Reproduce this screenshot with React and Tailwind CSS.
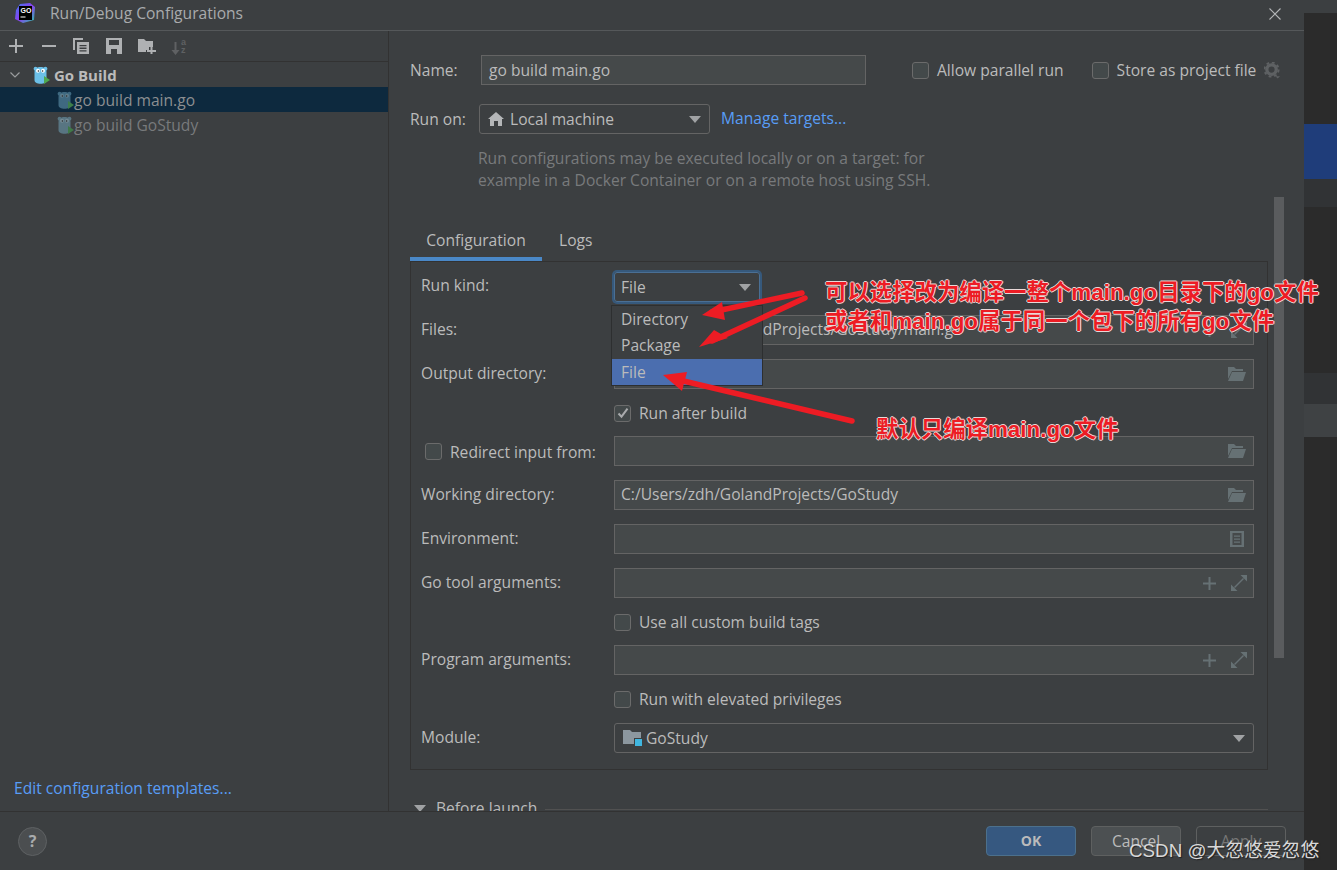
import React from 'react';

const Gopher = ({ body = '#6cc0e8', eye = '#ffffff', play = '#4fa84f', className = '' }) => (
  <svg viewBox="0 0 17 18" className={className}>
    <circle cx="2.600" cy="2.800" r="2" fill={body} />
    <circle cx="12.400" cy="2.800" r="2" fill={body} />
    <path d="M1.500 6c0-3.400 2.800-5 6-5s6 1.600 6 5v8c0 2.600-2.400 3.800-6 3.800s-6-1.200-6-3.800z" fill={body} />
    <circle cx="5" cy="4.800" r="2" fill={eye} />
    <circle cx="10" cy="4.800" r="2" fill={eye} />
    <circle cx="5.400" cy="5" r="0.800" fill="#2b2b2b" />
    <circle cx="9.600" cy="5" r="0.800" fill="#2b2b2b" />
    <path d="M11 10l6 4-6 4z" fill={play} />
  </svg>
);

const FolderOpen = () => (
  <svg viewBox="0 0 20 16" className="w-5 h-4">
    <path d="M1 1h6l2 2h7v2H5L1 13z" fill="#667174" />
    <path d="M5 6h14l-3 9H1z" fill="#667174" />
  </svg>
);

const PlusExpand = () => (
  <div className="flex items-center gap-[15px]">
    <svg viewBox="0 0 13 13" className="w-[13px] h-[13px]">
      <path d="M5.500 0h2v5.500H13v2H7.500V13h-2V7.500H0v-2h5.500z" fill="#667174" />
    </svg>
    <svg viewBox="0 0 16 16" className="w-4 h-4">
      <path d="M9.500 0H16v6.500zM0 9.500V16h6.500z" fill="#667174" />
      <path d="M3.500 12.500l9-9" stroke="#667174" strokeWidth="1.400" />
    </svg>
  </div>
);

const Caret = () => (
  <svg viewBox="0 0 12 7" className="w-3 h-[7px]">
    <path d="M0 0h12L6 7z" fill="#a0a2a4" />
  </svg>
);

const Checkbox = ({ checked }) => (
  <span className="w-[17px] h-[17px] shrink-0 rounded-[3px] border border-[#6b6b6b] bg-[#43494a] flex items-center justify-center">
    {checked && (
      <svg viewBox="0 0 12 12" className="w-3 h-3">
        <path d="M1.500 6.500l3 3.200 6-8" fill="none" stroke="#a9abad" strokeWidth="2" />
      </svg>
    )}
  </span>
);

const Input = ({ children, icon }) => (
  <div className="w-[640px] h-[30px] border border-[#646464] bg-[#45494a] pl-[6px] pr-[6px] flex items-center justify-between">
    <span className="pb-[2px]">{children}</span>
    {icon}
  </div>
);

const Row = ({ label, children, className = '', labelClass = 'pb-[2px]' }) => (
  <div className={`h-[30px] flex items-center ${className}`}>
    <div className={`w-[193px] shrink-0 ${labelClass}`}>{label}</div>
    {children}
  </div>
);

const CheckRow = ({ checked, children }) => (
  <div className="h-5 pl-[193px] flex items-center gap-2">
    <Checkbox checked={checked} />
    <span>{children}</span>
  </div>
);

const App = () => {
  return (
    <div className="w-[1337px] h-[870px] relative flex overflow-hidden bg-[#2b2b2b] text-[#bbbbbb] text-[15.6px] leading-6 font-['Open_Sans','Noto_Sans_CJK_SC',sans-serif]">
      <div className="w-[1304px] h-full flex flex-col bg-[#3c3f41]">
        {/* Title bar */}
        <div className="h-[31px] shrink-0 border-b border-[#55585a] flex items-center pl-[15px] pr-[23px]">
          <svg viewBox="0 0 20 20" className="w-5 h-5 mr-[15px] mb-[4px]">
            <defs>
              <linearGradient id="goland" x1="0" y1="0" x2="1" y2="1">
                <stop offset="0" stopColor="#3b7cf0" />
                <stop offset="0.5" stopColor="#8a3ff0" />
                <stop offset="1" stopColor="#25c9a0" />
              </linearGradient>
            </defs>
            <path d="M5 1l10-1 5 4-1 13-11 3-8-4 1-9z" fill="url(#goland)" />
            <rect x="4" y="3" width="13" height="14" fill="#000000" />
            <text x="5.500" y="10" fontSize="7" fontWeight="700" fill="#ffffff" fontFamily="Liberation Sans">GO</text>
            <rect x="5.500" y="13.500" width="5" height="1" fill="#ffffff" />
          </svg>
          <span className="text-[#a9abad] pb-[4px]">Run/Debug Configurations</span>
          <svg viewBox="0 0 12 12" className="w-3 h-3 ml-auto mb-[2px]">
            <path d="M0.500 0.500l11 11M11.500 0.500l-11 11" stroke="#b4b6b8" strokeWidth="1.100" />
          </svg>
        </div>

        <div className="flex-1 flex min-h-0">
          {/* Sidebar */}
          <aside className="w-[389px] shrink-0 border-r border-[#323232] flex flex-col">
            <div className="h-[31px] shrink-0 border-b border-[#323232] flex items-center pl-[9px] gap-[17px]">
              <svg viewBox="0 0 14 14" className="w-[14px] h-[14px]">
                <path d="M6 0h2v6h6v2H8v6H6V8H0V6h6z" fill="#afb1b3" />
              </svg>
              <svg viewBox="0 0 14 14" className="w-[14px] h-[14px] ml-[2px]">
                <path d="M0 6h14v2H0z" fill="#afb1b3" />
              </svg>
              <svg viewBox="0 0 16 16" className="w-4 h-4">
                <path d="M0 0h10v2H2v10H0z" fill="#afb1b3" />
                <path d="M4 4h12v12H4z" fill="#afb1b3" />
                <path d="M6.500 7h7v1.300h-7zM6.500 9.600h7v1.300h-7zM6.500 12.200h7v1.300h-7z" fill="#3c3f41" />
              </svg>
              <svg viewBox="0 0 16 16" className="w-4 h-4">
                <path d="M0 0h16v16H0z" fill="#afb1b3" />
                <path d="M3 2h10v5H3z" fill="#3c3f41" />
                <path d="M5 11h6v5H5z" fill="#3c3f41" />
              </svg>
              <svg viewBox="0 0 18 16" className="w-[18px] h-4 -ml-px">
                <path d="M0 1h6l2 2h7v6h-4v3H8v2H0z" fill="#afb1b3" />
                <path d="M12.500 9h2v3H18v2h-3.500v2h-2v-2H9v-2h3.500z" fill="#afb1b3" />
              </svg>
              <svg viewBox="0 0 18 18" className="w-[18px] h-[18px] -ml-[2px]">
                <path d="M3.500 5h2v8h3l-4 5-4-5h3z" fill="#5f6163" />
                <text x="10" y="8" fontSize="9" fontWeight="700" fill="#5f6163" fontFamily="Liberation Sans">a</text>
                <text x="10" y="16" fontSize="9" fontWeight="700" fill="#5f6163" fontFamily="Liberation Sans">z</text>
              </svg>
            </div>

            <div className="h-[25px] flex items-center pl-[10px]">
              <svg viewBox="0 0 10 6" className="w-[10px] h-[6px] mr-[13px]">
                <path d="M0.500 0.500L5 5l4.500-4.500" fill="none" stroke="#9a9c9e" strokeWidth="1.200" />
              </svg>
              <Gopher className="w-[17px] h-[18px] mr-[4px]" />
              <span className="font-bold text-[15px] mt-[1px]">Go Build</span>
            </div>
            <div className="h-[25px] flex items-center pl-[57px] bg-[#0d293e] text-[#8c8f91]">
              <Gopher body="#3f6980" eye="#5f7d8c" play="#3d7f4a" className="w-[17px] h-[18px]" />
              <span className="mt-[1px]">go build main.go</span>
            </div>
            <div className="h-[25px] flex items-center pl-[57px] text-[#787a7c]">
              <Gopher body="#587582" eye="#768c96" play="#3f7a48" className="w-[17px] h-[18px]" />
              <span className="mt-[1px]">go build GoStudy</span>
            </div>

            <div className="mt-auto pl-[14px] pb-[11px] text-[#589df6]">Edit configuration templates...</div>
          </aside>

          {/* Config form */}
          <main className="flex-1 min-w-0 relative overflow-hidden pl-[21px] pt-[24px]">
            <div className="h-[30px] flex items-center">
              <span className="w-[71px]">Name:</span>
              <div className="w-[385px] h-[30px] border border-[#646464] bg-[#45494a] px-[7px] flex items-center">go build main.go</div>
              <div className="ml-[46px] flex items-center gap-2">
                <Checkbox />
                <span>Allow parallel run</span>
              </div>
              <div className="ml-[28px] flex items-center gap-2">
                <Checkbox />
                <span>Store as project file</span>
              </div>
              <svg viewBox="0 0 18 18" className="w-[17px] h-[17px] ml-[8px]">
                <circle cx="8" cy="8" r="5" fill="none" stroke="#5e6163" strokeWidth="3.500" />
                <circle cx="8" cy="8" r="7.500" fill="none" stroke="#5e6163" strokeWidth="2" strokeDasharray="3 2.900" />
                <path d="M12 15h5l-2.500 2.500z" fill="#5e6163" />
              </svg>
            </div>

            <div className="mt-[19px] h-[30px] flex items-center">
              <span className="w-[69px]">Run on:</span>
              <div className="w-[231px] h-[30px] rounded-[3px] border border-[#646464] pl-2 pr-[8px] flex items-center">
                <svg viewBox="0 0 16 14" className="w-4 h-[14px] mr-[6px]">
                  <path d="M8 0l8 7h-2v7h-4V9H6v5H2V7H0z" fill="#b4b6b8" />
                </svg>
                <span>Local machine</span>
                <span className="ml-auto"><Caret /></span>
              </div>
              <span className="ml-[11px] text-[#589df6] pb-[3px]">Manage targets...</span>
            </div>

            <p className="mt-[13px] ml-[68px] leading-[22px] text-[#787a7c]">
              Run configurations may be executed locally or on a target: for
              <br />
              example in a Docker Container or on a remote host using SSH.
            </p>

            {/* Tabs */}
            <div className="mt-[36px] h-[34px] flex">
              <div className="w-[132px] border-b-4 border-[#4a88c7] flex items-center justify-center pb-[4px]">Configuration</div>
              <div className="ml-[17px] flex items-center pb-[8px]">Logs</div>
            </div>

            <div className="w-[858px] h-[509px] border border-[#323232] pl-[10px] pt-[10px] flex flex-col gap-[14px]">
              <Row label="Run kind:" labelClass="pb-[4px]">
                <div className="relative">
                  <div className="w-[146px] h-[30px] rounded-[3px] border border-[#4a6f94] ring-2 ring-[#36597c] pl-[6px] pr-[8px] flex items-center justify-between">
                    <span>File</span>
                    <Caret />
                  </div>
                  <div className="absolute left-[-3px] top-[33px] w-[152px] h-[81px] z-10 bg-[#3c3f41] border border-[#2d2f30]">
                    <div className="h-[26px] pl-[9px] flex items-center">Directory</div>
                    <div className="h-[27px] pl-[9px] pb-[1px] flex items-center">Package</div>
                    <div className="h-[26px] pl-[9px] flex items-center bg-[#4b6eaf]">File</div>
                  </div>
                </div>
              </Row>
              <Row label="Files:" className="-mt-px">
                <Input icon={<PlusExpand />}>C:/Users/zdh/GolandProjects/GoStudy/main.go</Input>
              </Row>
              <Row label="Output directory:">
                <Input icon={<FolderOpen />} />
              </Row>
              <CheckRow checked>Run after build</CheckRow>
              <div className="h-[30px] -mt-px flex items-center">
                <div className="w-[193px] shrink-0 pl-[4px] flex items-center gap-2">
                  <Checkbox />
                  <span className="mt-[2px]">Redirect input from:</span>
                </div>
                <Input icon={<FolderOpen />} />
              </div>
              <Row label="Working directory:">
                <Input icon={<FolderOpen />}>C:/Users/zdh/GolandProjects/GoStudy</Input>
              </Row>
              <Row label="Environment:">
                <Input
                  icon={
                    <svg viewBox="0 0 14 16" className="w-[14px] h-4 mr-[3px]">
                      <path d="M0 0h14v16H0z" fill="#667174" />
                      <path d="M2.500 2h9v12h-9z" fill="#45494a" />
                      <path d="M4 4.500h6v1.300H4zM4 7.500h6v1.300H4zM4 10.500h6v1.300H4z" fill="#667174" />
                    </svg>
                  }
                />
              </Row>
              <Row label="Go tool arguments:">
                <Input icon={<PlusExpand />} />
              </Row>
              <CheckRow>Use all custom build tags</CheckRow>
              <Row label="Program arguments:" className="-mt-px">
                <Input icon={<PlusExpand />} />
              </Row>
              <CheckRow>Run with elevated privileges</CheckRow>
              <Row label="Module:">
                <div className="w-[640px] h-[30px] rounded-[3px] border border-[#646464] pl-2 pr-[8px] flex items-center">
                  <svg viewBox="0 0 19 18" className="w-[19px] h-[18px] mr-[4px]">
                    <path d="M0 1h7l2 2h9v12H0z" fill="#8c979f" />
                    <path d="M11 9h8v8h-8z" fill="#3c3f41" />
                    <path d="M12 10h7v7h-7z" fill="#40b6e0" />
                  </svg>
                  <span>GoStudy</span>
                  <span className="ml-auto"><Caret /></span>
                </div>
              </Row>
            </div>

            {/* Before launch, cut off by the footer */}
            <div className="mt-[28px] w-[858px] h-5 flex items-center pl-[4px]">
              <span className="mr-[10px]"><Caret /></span>
              <span>Before launch</span>
              <span className="flex-1 h-px bg-[#515151] ml-2 mt-[3px]" />
            </div>

            <div className="absolute left-[885px] top-[166px] w-[10px] h-[461px] bg-[#5a5c5e]" />
          </main>
        </div>

        {/* Footer */}
        <div className="h-[59px] shrink-0 border-t border-[#323232] flex items-center pl-[18px] pr-[18px]">
          <div className="w-[29px] h-[29px] rounded-full bg-[#4b4e50] border border-[#5e6163] flex items-center justify-center font-bold text-[#a9abad] text-[16px]">?</div>
          <div className="ml-auto flex gap-[15px]">
            <div className="w-[90px] h-[30px] rounded-[4px] bg-[#365880] border border-[#4c708c] flex items-center justify-center font-bold text-[14px] text-[#bbbbbb]">OK</div>
            <div className="w-[90px] h-[30px] rounded-[4px] bg-[#4c5052] border border-[#5e6060] flex items-center justify-center">Cancel</div>
            <div className="w-[90px] h-[30px] rounded-[4px] border border-[#5e6060] flex items-center justify-center text-[#777777]">Apply</div>
          </div>
        </div>
      </div>

      {/* Other IDE window behind the dialog */}
      <div className="flex-1 flex flex-col">
        <div className="h-[13px] bg-[#3c3f41]" />
        <div className="h-[111px]" />
        <div className="h-[55px] bg-[#1f3d7a]" />
        <div className="h-[28px] bg-[#313335]" />
        <div className="h-[166px]" />
        <div className="h-[31px] bg-[#313335]" />
        <div className="h-[33px] bg-[#3f4244]" />
      </div>

      {/* Red annotations pasted on top */}
      <svg viewBox="0 0 1337 870" className="absolute inset-0 w-[1337px] h-[870px] pointer-events-none z-20">
        <path d="M802 293L712 312" stroke="#ed1c24" strokeWidth="5.500" strokeLinecap="round" />
        <path d="M702 315L722 302L725 320z" fill="#ed1c24" />
        <path d="M805 298L712 341" stroke="#ed1c24" strokeWidth="5.500" strokeLinecap="round" />
        <path d="M699 347L714 330L728 338z" fill="#ed1c24" />
        <path d="M852 421L675 379" stroke="#ed1c24" strokeWidth="5.500" strokeLinecap="round" />
        <path d="M663 375L687 372L682 391z" fill="#ed1c24" />
      </svg>
      <div className="absolute left-[825px] top-[278px] z-20 text-[22.4px] leading-[29px] font-bold text-[#ed1c24] whitespace-nowrap font-['Liberation_Sans','Noto_Sans_CJK_SC',sans-serif] [text-shadow:-1px_0_#e8d8d8,1px_0_#e8d8d8,0_-1px_#e8d8d8,0_1px_#e8d8d8]">
        <div>可以选择改为编译一整个main.go目录下的go文件</div>
        <div>或者和main.go属于同一个包下的所有go文件</div>
      </div>
      <div className="absolute left-[876px] top-[415px] z-20 text-[22.4px] leading-[29px] font-bold text-[#ed1c24] whitespace-nowrap font-['Liberation_Sans','Noto_Sans_CJK_SC',sans-serif] [text-shadow:-1px_0_#e8d8d8,1px_0_#e8d8d8,0_-1px_#e8d8d8,0_1px_#e8d8d8]">
        默认只编译main.go文件
      </div>

      {/* Watermark */}
      <div className="absolute left-[1129px] top-[837px] z-20 text-[18.8px] leading-[28px] text-[#d8d8d8] whitespace-nowrap font-['Liberation_Sans','Noto_Sans_CJK_SC',sans-serif] [text-shadow:1px_1px_1px_#222222]">
        CSDN @大忽悠爱忽悠
      </div>
    </div>
  );
};

export default App;
